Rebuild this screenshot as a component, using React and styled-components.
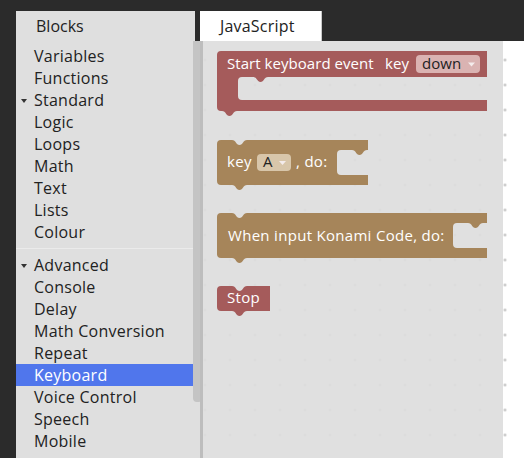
import styled, { createGlobalStyle } from 'styled-components';

const GlobalStyle = createGlobalStyle`
    html, body {
        margin: 0;
        padding: 0;
        background: #2b2b2b;
        overflow: hidden;
    }
`;

const Page = styled.div`
    width: 524px;
    height: 458px;
    box-sizing: border-box;
    padding: 11px 0 0 16px;
    background: #2b2b2b;
    font-family: "Open Sans", "Liberation Sans", sans-serif;
    display: grid;
    grid-template-columns: 179px 5px 3px 1fr;
    grid-template-rows: 30px 1fr;
`;

const Header = styled.div`
    grid-column: 1 / 2;
    background: #dfdfdf;
    color: #222;
    font-size: 16px;
    line-height: 30px;
    padding-left: 20px;
`;

const Tab = styled.div`
    grid-column: 3 / 5;
    justify-self: start;
    width: 122px;
    background: #fff;
    border-right: 1px solid #c9c9c9;
    color: #222;
    font-size: 16px;
    letter-spacing: 0.2px;
    line-height: 30px;
    padding-left: 20px;
    box-sizing: border-box;
`;

const List = styled.div`
    grid-column: 1 / 4;
    position: relative;
    background: #dfdfdf;
    border-right: 3px solid #bdbdbd;
    padding-top: 4px;
    overflow: hidden;
`;

const Thumb = styled.div`
    position: absolute;
    top: 0;
    right: -2px;
    width: 9px;
    height: 361px;
    background: #c4c4c4;
    border-radius: 0 0 4px 4px;
`;

const Row = styled.div`
    position: relative;
    height: 22px;
    line-height: 22px;
    font-size: 16px;
    letter-spacing: 0.25px;
    padding-left: 18px;
    margin-right: 7px;
    color: ${(p) => (p.$active ? '#fff' : '#222')};
    background: ${(p) => (p.$active ? '#5076ec' : 'transparent')};
`;

const Caret = styled.span`
    position: absolute;
    left: 5px;
    top: 10px;
    width: 0;
    height: 0;
    border-left: 3px solid transparent;
    border-right: 3px solid transparent;
    border-top: 4px solid #333;
`;

const Separator = styled.div`
    height: 1px;
    margin: 5px 7px 5px 0;
    background: #ebebeb;
`;

const Workspace = styled.div`
    grid-column: 4 / 5;
    display: flex;
    background-color: #fff;
    background-image: radial-gradient(circle, #c4c4c4 1px, transparent 1.6px);
    background-size: 25px 25px;
    background-position: -10.5px 6.5px;
`;

const Flyout = styled.div`
    width: 300px;
    box-sizing: border-box;
    padding: 10px 0 0 14px;
    background: rgba(221, 221, 221, 0.92);
    display: flex;
    flex-direction: column;
    align-items: flex-start;
    gap: 23px;
`;

const BlockSvg = styled.svg`
    display: block;
    overflow: visible;
    font-family: "Open Sans", "Liberation Sans", sans-serif;
    font-size: 15px;
    letter-spacing: ${(p) => p.$spacing || '0.3px'};

    .label {
        fill: #fff;
    }
    .field {
        fill: #222;
    }
`;

const RED = '#a55b5b';
const BROWN = '#a6855a';

// notch cut into the top edge, going right from x
const topNotch = (x) =>
    `H${x} C${x + 4},0 ${x + 4},5 ${x + 7.5},5 C${x + 11},5 ${x + 11},0 ${x + 15},0`;

// tab hanging under an edge at height y, going left from x+15 to x
const tabLeft = (x, y) =>
    `H${x + 15} C${x + 11},${y} ${x + 11},${y + 5} ${x + 7.5},${y + 5} C${x + 4},${y + 5} ${x + 4},${y} ${x},${y}`;

// statement hole opening to the right edge
const hole = (left, top, bottom, right) =>
    `V${top} ${tabLeft(left + 15, top)} H${left + 4} Q${left},${top} ${left},${top + 4} V${bottom - 4} Q${left},${bottom} ${left + 4},${bottom} H${right}`;

const Dropdown = ({ x, y, w, h, fill, text }) => (
    <g>
        <rect x={x} y={y} width={w} height={h} rx="4" fill={fill} />
        <text className="field" x={x + 6} y={y + h - 4}>{text}</text>
        <path d={`M${x + w - 12},${y + h / 2 - 1.5} h7 l-3.5,4 z`} fill="#f4ecec" />
    </g>
);

const KeyboardEventBlock = () => {
    const d = `M0,4 Q0,0 4,0 H270 ${hole(21, 26, 49, 270)} V60 ${tabLeft(5, 60)} H4 Q0,60 0,56 Z`;
    return (
        <BlockSvg width="270" height="66" $spacing="0.05px">
            <path d={d} fill={RED} />
            <text className="label" x="10" y="18">Start keyboard event</text>
            <text className="label" x="168" y="18">key</text>
            <Dropdown x={199} y={4} w={64} h={18} fill="#dab3b2" text="down" />
        </BlockSvg>
    );
};

const KeyDoBlock = () => {
    const d = `M0,4 Q0,0 4,0 ${topNotch(15)} H151 ${hole(120, 10, 35, 151)} V45 ${tabLeft(15, 45)} H4 Q0,45 0,41 Z`;
    return (
        <BlockSvg width="151" height="50">
            <path d={d} fill={BROWN} />
            <text className="label" x="10" y="27">key</text>
            <Dropdown x={40} y={14} w={34} h={17} fill="#d8c6aa" text="A" />
            <text className="label" x="79" y="27">, do:</text>
        </BlockSvg>
    );
};

const KonamiBlock = () => {
    const d = `M0,4 Q0,0 4,0 ${topNotch(15)} H270 ${hole(236, 10, 35, 270)} V45 ${tabLeft(15, 45)} H4 Q0,45 0,41 Z`;
    return (
        <BlockSvg width="270" height="50">
            <path d={d} fill={BROWN} />
            <text className="label" x="11" y="28">When input Konami Code, do:</text>
        </BlockSvg>
    );
};

const StopBlock = () => {
    const d = `M0,4 Q0,0 4,0 ${topNotch(15)} H53 V25 ${tabLeft(15, 25)} H4 Q0,25 0,21 Z`;
    return (
        <BlockSvg width="53" height="30">
            <path d={d} fill={RED} />
            <text className="label" x="10" y="17">Stop</text>
        </BlockSvg>
    );
};

const standard = ['Logic', 'Loops', 'Math', 'Text', 'Lists', 'Colour'];
const advanced = ['Console', 'Delay', 'Math Conversion', 'Repeat', 'Keyboard', 'Voice Control', 'Speech', 'Mobile'];

const App = () => {
    return (
        <>
            <GlobalStyle />
            <Page>
                <Header>Blocks</Header>
                <Tab>JavaScript</Tab>
                <List>
                    <Row>Variables</Row>
                    <Row>Functions</Row>
                    <Row><Caret />Standard</Row>
                    {standard.map((name) => (
                        <Row key={name}>{name}</Row>
                    ))}
                    <Separator />
                    <Row><Caret />Advanced</Row>
                    {advanced.map((name) => (
                        <Row key={name} $active={name === 'Keyboard'}>{name}</Row>
                    ))}
                    <Thumb />
                </List>
                <Workspace>
                    <Flyout>
                        <KeyboardEventBlock />
                        <KeyDoBlock />
                        <KonamiBlock />
                        <StopBlock />
                    </Flyout>
                </Workspace>
            </Page>
        </>
    );
};

export default App;
